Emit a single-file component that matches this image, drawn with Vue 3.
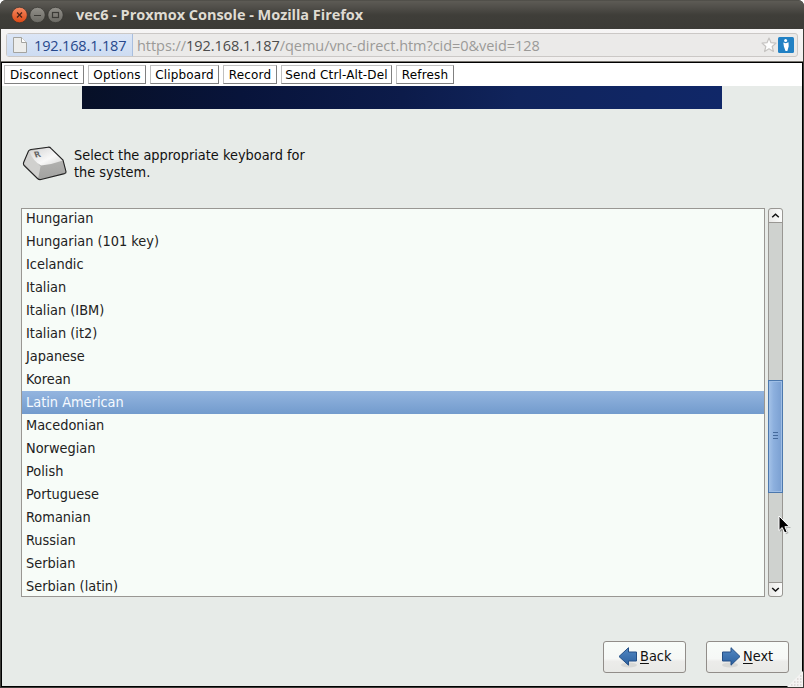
<script setup>
    import { ref } from 'vue';

    // Buttons of the VNC applet, widths in px
    const vncButtons = [
        { label: 'Disconnect', width: 80 },
        { label: 'Options', width: 58 },
        { label: 'Clipboard', width: 69 },
        { label: 'Record', width: 54 },
        { label: 'Send Ctrl-Alt-Del', width: 111 },
        { label: 'Refresh', width: 58 },
    ]

    const keyboards = [
        'Hungarian',
        'Hungarian (101 key)',
        'Icelandic',
        'Italian',
        'Italian (IBM)',
        'Italian (it2)',
        'Japanese',
        'Korean',
        'Latin American',
        'Macedonian',
        'Norwegian',
        'Polish',
        'Portuguese',
        'Romanian',
        'Russian',
        'Serbian',
        'Serbian (latin)',
    ]

    const selected = ref('Latin American')
</script>

<template>
    <div class="window">
        <header class="titlebar">
            <svg class="controls" width="56" height="18" viewBox="0 0 56 18">
                <defs>
                    <linearGradient id="closeFill" x1="0" y1="0" x2="0" y2="1">
                        <stop offset="0" stop-color="#f58a63" />
                        <stop offset="1" stop-color="#dd4814" />
                    </linearGradient>
                    <linearGradient id="greyFill" x1="0" y1="0" x2="0" y2="1">
                        <stop offset="0" stop-color="#92908a" />
                        <stop offset="1" stop-color="#6a6963" />
                    </linearGradient>
                </defs>
                <circle cx="9.5" cy="9" r="7.8" fill="url(#closeFill)" stroke="#33322e" stroke-width=".7" />
                <path d="M7 6.500l5 5M12 6.500l-5 5" stroke="#4a2317" stroke-width="1.3" />
                <circle cx="27.5" cy="9" r="7.7" fill="url(#greyFill)" stroke="#33322e" stroke-width=".7" />
                <path d="M24 9.500h7" stroke="#3c3b37" stroke-width="1.2" />
                <circle cx="45.5" cy="9" r="7.7" fill="url(#greyFill)" stroke="#33322e" stroke-width=".7" />
                <rect x="42.5" y="6.500" width="6" height="5" fill="none" stroke="#3c3b37" stroke-width="1.2" />
            </svg>
            <h1 class="title">vec6 - Proxmox Console - Mozilla Firefox</h1>
        </header>

        <div class="navbar">
            <div class="urlbar">
                <div class="identity">
                    <svg class="page-icon" width="14" height="16" viewBox="0 0 14 16">
                        <path d="M.5.5h8l5 5v10H.5z" fill="#ededeb" stroke="#a3a39f" />
                        <path d="M8.500.5v5h5" fill="#fff" stroke="#a3a39f" />
                    </svg>
                    <span class="host">192.168.1.187</span>
                </div>
                <span class="url">https://<b>192.168.1.187</b>/qemu/vnc-direct.htm?cid=0&amp;veid=128</span>
                <svg class="star" width="16" height="16" viewBox="0 0 16 16">
                    <path d="M8 1l2 4.700 5 .4-3.800 3.400 1.200 5L8 11.800l-4.400 2.700 1.200-5L1 6.100l5-.4z" fill="#fdfdfd" stroke="#c6c4c2" stroke-width="1.200" stroke-linejoin="round" />
                </svg>
                <svg class="addon" width="16" height="16" viewBox="0 0 16 16">
                    <rect width="16" height="16" rx="1.500" fill="#2281c4" />
                    <circle cx="7.600" cy="3.400" r="1.500" fill="#fff" />
                    <path d="M5.300 5.400l2.500.8 2.700-.9.200 4-1.300 4.700H7.500L5.900 9.500z" fill="#fff" />
                </svg>
            </div>
        </div>

        <main class="content">
            <div class="vnc-bar">
                <button v-for="btn in vncButtons" :key="btn.label" class="vnc-button" :style="{ width: btn.width + 'px' }">{{ btn.label }}</button>
            </div>

            <div class="installer">
                <div class="banner"></div>

                <div class="prompt">
                    <svg class="key-icon" width="46" height="36" viewBox="0 0 46 36">
                        <defs>
                            <linearGradient id="keyTop" x1="0" y1="0" x2="1" y2="1">
                                <stop offset="0" stop-color="#d2d2d2" />
                                <stop offset=".6" stop-color="#f8f8f8" />
                                <stop offset="1" stop-color="#d5d5d3" />
                            </linearGradient>
                            <linearGradient id="keyFront" x1="0" y1="0" x2="0" y2="1">
                                <stop offset=".3" stop-color="#b4b4b2" />
                                <stop offset="1" stop-color="#a2a2a0" />
                            </linearGradient>
                        </defs>
                        <path d="M6.500 5Q7 4 9 3.500L26 1.200Q28 1 29 2.300L41 14L44 25.500Q44.300 27 42.500 27.600L19 33.500Q17 34 15.500 32.500L2 19.500Q1 18 1.600 16.500z" fill="url(#keyFront)" />
                        <path d="M6.500 5L2 17.500L16 33L18.500 20.500z" fill="#d0d0ce" />
                        <path d="M7 5L28 1.500L41 14.500Q30 18.500 19 19.500Q11 15 7 5z" fill="url(#keyTop)" />
                        <path d="M6.500 5Q7 4 9 3.500L26 1.200Q28 1 29 2.300L41 14L44 25.500Q44.300 27 42.500 27.600L19 33.500Q17 34 15.500 32.500L2 19.500Q1 18 1.600 16.500z" fill="none" stroke="#222" stroke-width="1.100" />
                        <text class="key-letter" x="10.500" y="11.500" transform="rotate(-8 14 9) skewX(12)">R</text>
                    </svg>
                    <p class="prompt-text">Select the appropriate keyboard for<br>the system.</p>
                </div>

                <div class="picker">
                    <ul class="list">
                        <li v-for="name in keyboards" :key="name" class="row" :class="{ selected: name === selected }" @click="selected = name">{{ name }}</li>
                    </ul>
                    <div class="scrollbar">
                        <div class="arrow up">
                            <svg width="9" height="6" viewBox="0 0 9 6"><path d="M1.200 4.200L4.500 1.200L7.800 4.200" fill="none" stroke="#111" stroke-width="1.500" /></svg>
                        </div>
                        <div class="thumb"><i></i><i></i><i></i></div>
                        <div class="arrow down">
                            <svg width="9" height="6" viewBox="0 0 9 6"><path d="M1.200 1L4.500 4L7.800 1" fill="none" stroke="#111" stroke-width="1.500" /></svg>
                        </div>
                    </div>
                </div>

                <footer class="actions">
                    <button class="nav-button">
                        <svg width="20" height="22" viewBox="0 0 20 22">
                            <defs>
                                <linearGradient id="arrowFill" x1="0" y1="0" x2="0" y2="1">
                                    <stop offset="0" stop-color="#5288c3" />
                                    <stop offset="1" stop-color="#2b609f" />
                                </linearGradient>
                            </defs>
                            <ellipse cx="11" cy="19" rx="8" ry="2.500" fill="#000" opacity=".08" />
                            <path d="M1 10.500L10.500 1.700V6H18.500V15H10.500V19.200z" fill="url(#arrowFill)" stroke="#244f86" />
                        </svg>
                        <span><u>B</u>ack</span>
                    </button>
                    <button class="nav-button">
                        <svg width="20" height="22" viewBox="0 0 20 22">
                            <ellipse cx="9" cy="19" rx="8" ry="2.500" fill="#000" opacity=".08" />
                            <path d="M19 10.500L10 1.700V6H1.500V15H10V19.200z" fill="url(#arrowFill)" stroke="#244f86" />
                        </svg>
                        <span><u>N</u>ext</span>
                    </button>
                </footer>
            </div>
        </main>

        <svg class="grip" width="16" height="16" viewBox="0 0 16 16">
            <path d="M0 16L16 0V16z" fill="#f4f3f2" />
            <path d="M4 14h11M7 11h8M10 8h5M13 5h2" stroke="#d8d5d2" stroke-width="1.500" stroke-dasharray="1.500 1.500" />
        </svg>

        <svg class="cursor" width="14" height="20" viewBox="0 0 14 20">
            <path d="M2 2.500V17L5.500 14L8 19.200L10.500 18L8.400 13H13z" fill="#000" opacity=".25" />
            <path d="M1 1V15.500L4.200 12.500L6.700 18L9.200 16.900L6.900 11.700H11.500z" fill="#000" stroke="#fff" stroke-width="1" />
        </svg>
    </div>
</template>

<style>
    body {
        background: #fff;
    }
</style>

<style scoped>
    .window {
        position: relative;
        box-sizing: border-box;
        width: 804px;
        height: 688px;
        display: flex;
        flex-direction: column;
        background: #3c3b37;
        border-radius: 6px 6px 0 0;
        overflow: hidden;
        font-family: "DejaVu Sans Condensed", "DejaVu Sans", sans-serif;
    }

    .titlebar {
        height: 29px;
        flex: none;
        display: flex;
        align-items: center;
        padding-left: 10px;
        background: linear-gradient(#45443f 0, #5d5b55 1px, #514f4a 7px, #3f3e39 15px, #3c3b37 100%);
    }

    .title {
        margin: 0 0 0 10px;
        font: bold 14.5px/28px "Open Sans", sans-serif;
        letter-spacing: -0.03px;
        color: #dfdbd2;
        white-space: nowrap;
    }

    .navbar {
        height: 33px;
        flex: none;
        box-sizing: border-box;
        margin: 0 1px;
        padding: 4px 5px 0;
        background: linear-gradient(#f6f5f5, #f1efee);
        border-bottom: 1px solid #77756f;
    }

    .urlbar {
        display: flex;
        align-items: center;
        box-sizing: border-box;
        height: 24px;
        padding-right: 3px;
        border: 1px solid #cbc8c6;
        border-radius: 3px;
        background: #ebeae9;
        font: 14.5px/22px "Open Sans", sans-serif;
    }

    .identity {
        display: flex;
        align-items: center;
        box-sizing: border-box;
        width: 126px;
        height: 22px;
        padding-left: 6px;
        background: linear-gradient(#dce6f6, #cddcf2);
        border-right: 1px solid #a9bfdf;
        color: #27488c;
    }

    .host {
        margin: 2px 0 0 7px;
        letter-spacing: -0.15px;
    }

    .url {
        flex: 1;
        margin: 2px 0 0 4px;
        color: #9b9a98;
        letter-spacing: -0.05px;
        white-space: nowrap;
    }

    .url b {
        font-weight: normal;
        color: #4c4c4c;
    }

    .star {
        margin-right: 1px;
    }

    .content {
        flex: 1;
        display: flex;
        flex-direction: column;
        margin: 0 1px 1px;
        border: 1px solid #000;
        background: #e7ebe8;
    }

    .vnc-bar {
        display: flex;
        gap: 4px;
        box-sizing: border-box;
        height: 23px;
        padding: 2px;
        background: #fff;
    }

    .vnc-button {
        box-sizing: border-box;
        height: 19px;
        padding: 0;
        border: 1px solid;
        border-color: #c0c0c0 #808080 #808080 #c0c0c0;
        background: #fff;
        color: #000;
        font: 12px/16px "DejaVu Sans", sans-serif;
        letter-spacing: 0.15px;
        white-space: nowrap;
    }

    .installer {
        flex: 1;
        display: flex;
        flex-direction: column;
    }

    .banner {
        width: 640px;
        height: 23px;
        margin: 0 auto;
        background: linear-gradient(95deg, #071027 0, #08143b 25%, #0c1b4a 50%, #10245c 68%, #102664 88%, #102768 100%);
    }

    .prompt {
        display: flex;
        height: 99px;
        padding-left: 20px;
    }

    .key-icon {
        margin-top: 37px;
    }

    .key-letter {
        font: bold 8px "DejaVu Sans", sans-serif;
        fill: #666;
    }

    .prompt-text {
        margin: 38px 0 0 6px;
        font-size: 14.4px;
        line-height: 17px;
        color: #111;
        white-space: nowrap;
    }

    .picker {
        display: flex;
        gap: 3px;
        height: 389px;
        padding-left: 19px;
    }

    .list {
        box-sizing: border-box;
        width: 744px;
        margin: 0;
        padding: 0;
        border: 1px solid #999793;
        background: #f7fcf8;
        list-style: none;
        overflow: hidden;
    }

    .row {
        height: 23px;
        padding-left: 4px;
        font-size: 14.4px;
        line-height: 22px;
        color: #222;
    }

    .row:first-child {
        margin-top: -2px;
    }

    .row.selected {
        background: linear-gradient(#94b5df, #729bcd);
        color: #f5faff;
    }

    .scrollbar {
        box-sizing: border-box;
        display: flex;
        flex-direction: column;
        width: 15px;
        border: 1px solid #999793;
        border-radius: 3px;
        background: #cfd2cf;
    }

    .arrow {
        height: 13px;
        display: flex;
        align-items: center;
        justify-content: center;
        background: linear-gradient(90deg, #e9e9e7, #fbfcfb);
    }

    .up {
        border-bottom: 1px solid #999793;
        border-radius: 3px 3px 0 0;
    }

    .down {
        margin-top: auto;
        border-top: 1px solid #999793;
        border-radius: 0 0 3px 3px;
    }

    .thumb {
        box-sizing: border-box;
        display: flex;
        flex-direction: column;
        align-items: center;
        justify-content: center;
        gap: 2px;
        height: 113px;
        margin: 157px -1px 0;
        padding-bottom: 2px;
        border: 1px solid #4c78ad;
        background: linear-gradient(90deg, #a4c2e8, #8db0de 35%, #7a9fd1);
        box-shadow: inset 0 0 0 1px #9fbee5;
    }

    .thumb i {
        width: 5px;
        height: 1px;
        background: #456a9c;
    }

    .actions {
        display: flex;
        justify-content: flex-end;
        gap: 20px;
        margin-top: 44px;
        padding-right: 13px;
    }

    .nav-button {
        display: flex;
        align-items: center;
        box-sizing: border-box;
        width: 83px;
        height: 32px;
        padding: 0 0 0 14px;
        border: 1px solid #918d89;
        border-radius: 3px;
        background: linear-gradient(#f8fcf9 0, #f6f8f6 55%, #ececea 65%, #e8e9e6 100%);
        font: 14.4px/17px "DejaVu Sans Condensed", "DejaVu Sans", sans-serif;
        color: #111;
    }

    .nav-button span {
        margin: -1px 0 0 2px;
    }

    .nav-button u {
        text-underline-offset: 2px;
    }

    .grip {
        position: absolute;
        right: 1px;
        bottom: 1px;
    }

    .cursor {
        position: absolute;
        left: 778px;
        top: 515px;
    }
</style>
